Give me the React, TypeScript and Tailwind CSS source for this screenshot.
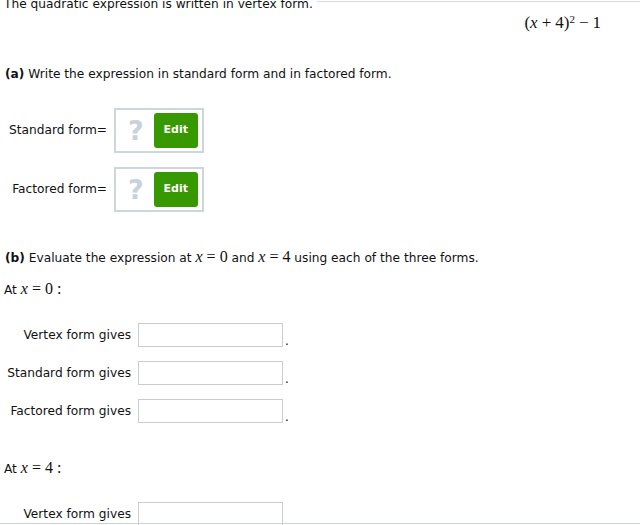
import React from "react";

const sans = { fontFamily: '"DejaVu Sans", Verdana, sans-serif' };

function M({ children, big = false }: { children: React.ReactNode; big?: boolean }) {
  return (
    <span className={big ? "text-[17px]" : "text-[16px]"} style={{ fontFamily: '"Liberation Serif", "Times New Roman", serif' }}>
      {children}
    </span>
  );
}

function Op({ c }: { c: string }) {
  return <span className="mx-[4px]">{c}</span>;
}

function EditBox() {
  return (
    <div className="flex h-[45px] w-[90px] items-center border-2 border-[#cdd5df] bg-white pl-[12px] pr-[4px]">
      <span className="w-[26px] text-[27px] font-bold leading-none text-[#c9d1dc]">?</span>
      <button className="ml-auto flex h-[35px] w-[45px] items-center justify-center rounded-[3px] bg-[#379800] text-[11px] font-bold text-white">
        Edit
      </button>
    </div>
  );
}

function Gives({ label, dot = true }: { label: string; dot?: boolean }) {
  return (
    <div className="flex items-center">
      <div className="w-[131px] text-right">{label}</div>
      <div className="ml-[7px] h-[24px] w-[145px] border border-[#cccccc] bg-white" />
      {dot && <span className="ml-[2px] mt-[12px] leading-none">.</span>}
    </div>
  );
}

export default function App() {
  return (
    <div className="relative h-[525px] w-[640px] overflow-hidden bg-white text-[12.2px] text-[#111]" style={sans}>
      <div className="flex items-start">
        <div className="-mt-[4px] ml-[4px] leading-[16px]">The quadratic expression is written in vertex form.</div>
        <div className="ml-[4px] mt-[1px] flex-1 border-t border-[#d3dae3]" />
      </div>
      <div className="-mt-[2px] pr-[39px] text-right">
        <M big>
          (<i>x</i>
          <Op c="+" />
          4)<sup className="text-[11px]">2</sup>
          <Op c="−" />1
        </M>
      </div>

      <div className="ml-[5px] mt-[29px]">
        <b>(a)</b> Write the expression in standard form and in factored form.
      </div>

      <div className="mt-[25px] flex items-center">
        <div className="w-[107px] text-right">Standard form=</div>
        <div className="ml-[7px]">
          <EditBox />
        </div>
      </div>
      <div className="mt-[14px] flex items-center">
        <div className="w-[107px] text-right">Factored form=</div>
        <div className="ml-[7px]">
          <EditBox />
        </div>
      </div>

      <div className="ml-[5px] mt-[33px]">
        <b>(b)</b> Evaluate the expression at{" "}
        <M>
          <i>x</i>
          <Op c="=" />0
        </M>{" "}
        and{" "}
        <M>
          <i>x</i>
          <Op c="=" />4
        </M>{" "}
        using each of the three forms.
      </div>
      <div className="ml-[4px] mt-[8px]">
        At{" "}
        <M>
          <i>x</i>
          <Op c="=" />0 :
        </M>
      </div>

      <div className="mt-[22px] flex flex-col gap-[14px]">
        <Gives label="Vertex form gives" />
        <Gives label="Standard form gives" />
        <Gives label="Factored form gives" />
      </div>

      <div className="ml-[4px] mt-[33px]">
        At{" "}
        <M>
          <i>x</i>
          <Op c="=" />4 :
        </M>
      </div>
      <div className="mt-[22px]">
        <Gives label="Vertex form gives" dot={false} />
      </div>

      <div className="absolute bottom-[1px] left-0 right-0 border-t border-[#c9d1dd]" />
    </div>
  );
}
